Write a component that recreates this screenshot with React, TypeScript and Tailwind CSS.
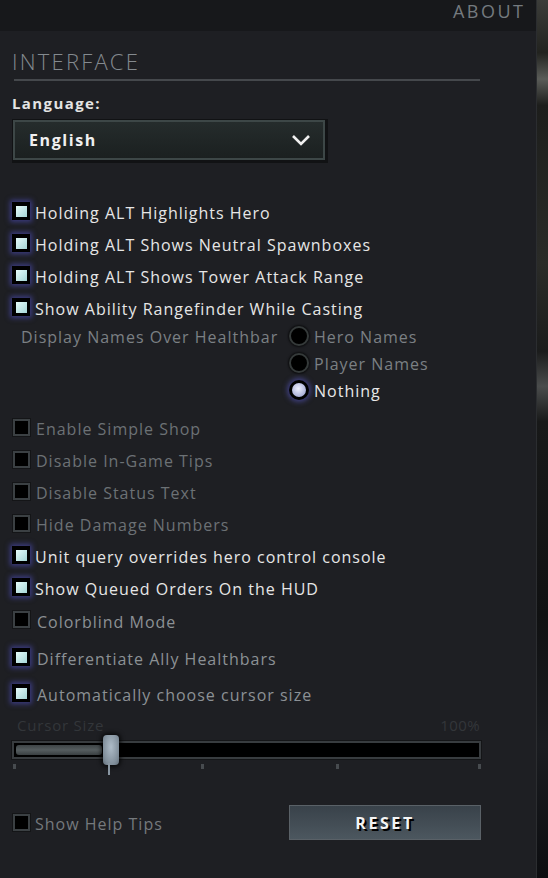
import React from "react";

const F = "font-['Open_Sans',sans-serif]";

function CheckBox({ checked }: { checked: boolean }) {
  if (checked) {
    return (
      <div className="w-[18px] h-[18px] shrink-0 bg-black flex items-center justify-center shadow-[0_0_5px_2px_rgba(78,78,190,0.6)]">
        <div className="w-[11px] h-[11px] bg-gradient-to-br from-[#e6fbfb] to-[#a6d6d6]" />
      </div>
    );
  }
  return (
    <div className="w-[19px] h-[19px] shrink-0 bg-[#141517] p-[1px]">
      <div className="w-full h-full border-2 border-[#3b4043] bg-black" />
    </div>
  );
}

function Row({
  checked,
  label,
  color,
  h = "h-[32px]",
  gap = "gap-[5px]",
}: {
  checked: boolean;
  label: string;
  color: string;
  h?: string;
  gap?: string;
}) {
  return (
    <div className={`flex items-center ${h} ${gap}`}>
      <CheckBox checked={checked} />
      <span className={`pt-[4px] text-[16px] tracking-[1px] leading-none ${color}`}>{label}</span>
    </div>
  );
}

function Radio({ checked, label }: { checked: boolean; label: string }) {
  return (
    <div className="flex items-center h-[27px] gap-[5px]">
      {checked ? (
        <div className="w-[20px] h-[20px] rounded-full bg-black flex items-center justify-center shadow-[0_0_5px_2px_rgba(90,90,200,0.55)]">
          <div className="w-[14px] h-[14px] rounded-full bg-[radial-gradient(circle_at_45%_40%,#eef0ff,#aab0d8_70%,#8088b8)]" />
        </div>
      ) : (
        <div className="w-[20px] h-[20px] rounded-full bg-black border-2 border-[#353a3a] shadow-[0_0_2px_1px_rgba(0,0,0,0.6)]" />
      )}
      <span className={`pt-[2px] text-[16px] tracking-[1px] leading-none ${checked ? "text-[#e8e8e8]" : "text-[#7b8084]"}`}>
        {label}
      </span>
    </div>
  );
}

export default function App() {
  const white = "text-[#e6e6e6]";
  const dim = "text-[#6c7175]";
  const mid = "text-[#8c9195]";
  return (
    <div className={`w-[548px] h-[878px] flex bg-[#1e1f23] overflow-hidden ${F}`}>
      <div className="w-[536px] h-full flex flex-col bg-[#1e1f23]">
        <div className="h-[31px] bg-[#17181b] flex items-start justify-end pr-[13px]">
          <span className="text-[18px] leading-[22px] tracking-[2.5px] text-[#747a7f] mr-[-2.5px]">ABOUT</span>
        </div>
        <div className="flex flex-col pl-[12px]">
          <div className="mt-[16px] h-[28px] flex items-center">
            <span className="text-[22px] font-light tracking-[2.2px] leading-none text-[#848a8f]">INTERFACE</span>
          </div>
          <div className="mt-[4px] ml-[2px] w-[466px] h-[2px] bg-[#45484c]" />
          <div className="mt-[12px] h-[20px] flex items-center">
            <span className="text-[15px] font-bold tracking-[1.4px] leading-none text-[#e4e4e4]">Language:</span>
          </div>
          <div className="mt-[6px] w-[316px] h-[44px] bg-[#111214] p-[1px] pr-[3px] pb-[3px]">
            <div className="w-full h-full border-2 border-[#3d4747] bg-gradient-to-b from-[#252c2c] to-[#1b2020] flex items-center justify-between pl-[14px] pr-[12px]">
              <span className="text-[16px] font-bold tracking-[1.6px] leading-none text-[#f0f0f0]">English</span>
              <svg width="20" height="14" viewBox="0 0 20 14">
                <path d="M2 3 L10 11 L18 3" stroke="#f0f0f0" strokeWidth="2.6" fill="none" />
              </svg>
            </div>
          </div>

          <div className="mt-[32px] flex flex-col">
            <Row checked label="Holding ALT Highlights Hero" color={white} />
            <Row checked label="Holding ALT Shows Neutral Spawnboxes" color={white} />
            <Row checked label="Holding ALT Shows Tower Attack Range" color={white} />
            <Row checked label="Show Ability Rangefinder While Casting" color={white} />
          </div>

          <div className="mt-[-1px] flex">
            <div className="w-[277px] h-[27px] flex items-center pl-[9px]">
              <span className="pt-[2px] text-[16px] tracking-[1px] leading-none text-[#7b8084]">Display Names Over Healthbar</span>
            </div>
            <div className="flex flex-col">
              <Radio checked={false} label="Hero Names" />
              <Radio checked={false} label="Player Names" />
              <Radio checked label="Nothing" />
            </div>
          </div>

          <div className="mt-[8px] flex flex-col">
            <Row checked={false} label="Enable Simple Shop" color={dim} />
            <Row checked={false} label="Disable In-Game Tips" color={dim} />
            <Row checked={false} label="Disable Status Text" color={dim} />
            <Row checked={false} label="Hide Damage Numbers" color={dim} />
            <Row checked label="Unit query overrides hero control console" color={white} />
            <Row checked label="Show Queued Orders On the HUD" color={white} />
            <Row checked={false} label="Colorblind Mode" color={mid} h="h-[33px]" gap="gap-[6px]" />
            <div className="h-[3px]" />
            <Row checked label="Differentiate Ally Healthbars" color={mid} h="h-[36px]" gap="gap-[7px]" />
            <Row checked label="Automatically choose cursor size" color={mid} h="h-[36px]" gap="gap-[7px]" />
          </div>

          <div className="mt-[5px] w-[469px] h-[18px] flex items-center justify-between pl-[5px] pr-[1px]">
            <span className="text-[15px] tracking-[0.8px] leading-none text-[#33363a]">Cursor Size</span>
            <span className="text-[15px] tracking-[0.4px] leading-none text-[#33363a]">100%</span>
          </div>

          <div className="relative mt-[7px] w-[469px] h-[18px] border-2 border-[#383c3f] bg-black shadow-[0_0_0_1px_#141517]">
            <div className="absolute left-[2px] top-[2px] w-[86px] h-[10px] rounded-[3px] bg-gradient-to-b from-[#3e4446] via-[#555d5f] to-[#3a4042]" />
            <div className="absolute left-[89px] top-[-8px] w-[16px] h-[30px] rounded-[4px] bg-[radial-gradient(ellipse_at_50%_40%,#aebcc8,#808e9a_70%,#606c77)] shadow-[0_0_4px_2px_rgba(0,0,0,0.7)]" />
          </div>
          <div className="relative w-[469px] h-[14px]">
            <div className="absolute left-[96px] top-[4px] w-[2px] h-[12px] bg-[#8996a2]" />
            <div className="absolute left-[1px] top-[5px] w-[3px] h-[5px] bg-[#474b4f]" />
            <div className="absolute left-[189px] top-[5px] w-[3px] h-[5px] bg-[#474b4f]" />
            <div className="absolute left-[324px] top-[5px] w-[3px] h-[5px] bg-[#474b4f]" />
            <div className="absolute left-[466px] top-[5px] w-[3px] h-[5px] bg-[#474b4f]" />
          </div>

          <div className="mt-[32px] w-[469px] flex items-center justify-between">
            <div className="flex items-center gap-[4px]">
              <CheckBox checked={false} />
              <span className="pt-[3px] text-[16px] tracking-[1px] leading-none text-[#75797d]">Show Help Tips</span>
            </div>
            <button className="w-[192px] h-[35px] border border-[#5a6167] bg-gradient-to-b from-[#39424a] to-[#4c575f] flex items-center justify-center">
              <span className="text-[16px] font-bold tracking-[2.6px] leading-none text-[#f4f4f4] [text-shadow:2px_2px_0_#000]">RESET</span>
            </button>
          </div>
        </div>
      </div>
      <div className="w-[1px] h-full bg-[#2b2d30]" />
      <div className="w-[11px] h-full bg-[linear-gradient(180deg,#3c3d3a_0%,#22231f_6%,#5a5c58_9%,#1d1e1c_12%,#2a2b28_30%,#1b1c1c_40%,#4a4c4c_44%,#181919_48%,#101112_70%,#1a1c20_85%,#0c0d10_100%)]" />
    </div>
  );
}
